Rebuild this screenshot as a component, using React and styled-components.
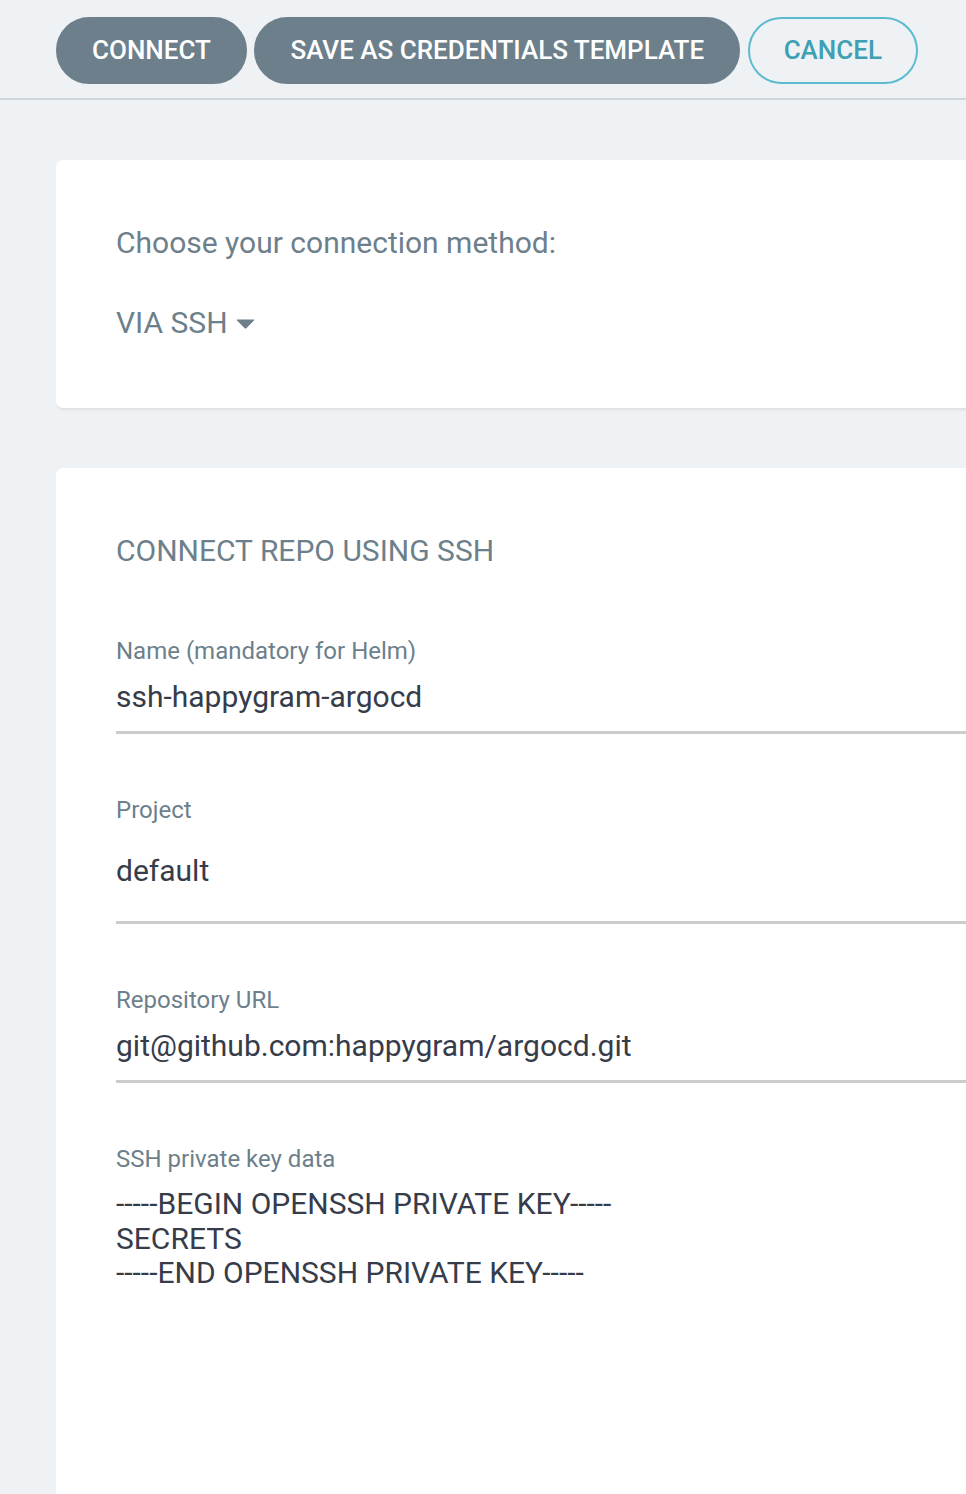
import React from 'react';
import styled, { createGlobalStyle } from 'styled-components';

const GlobalStyle = createGlobalStyle`
	html, body {
		margin: 0;
		padding: 0;
		background: #eef2f5;
		font-family: Roboto, "Liberation Sans", sans-serif;
		overflow: hidden;
	}
	* {
		box-sizing: border-box;
	}
`;

const fields = [
	{ label: 'Name (mandatory for Helm)', value: 'ssh-happygram-argocd' },
	{ label: 'Project', value: 'default', select: true },
	{ label: 'Repository URL', value: 'git@github.com:happygram/argocd.git' }
];

const keyData = '-----BEGIN OPENSSH PRIVATE KEY-----\nSECRETS\n-----END OPENSSH PRIVATE KEY-----';

export default function App() {
	return (
		<Page>
			<GlobalStyle />
			<Toolbar>
				<Button>Connect</Button>
				<Button>Save as credentials template</Button>
				<Button $outline>Cancel</Button>
			</Toolbar>
			<Content>
				<Card $top={65} $bottom={67}>
					<Heading $case="none">Choose your connection method:</Heading>
					<MethodToggle>
						VIA SSH
						<Caret width="19" height="10" viewBox="0 0 19 10">
							<path d="M1.5 0.5 H17.5 Q19 0.5 18 1.6 L10.5 9 Q9.5 10 8.5 9 L1 1.6 Q0 0.5 1.5 0.5 Z" fill="#6d7f8b" />
						</Caret>
					</MethodToggle>
				</Card>
				<Card $top={65} $bottom={400}>
					<Heading>Connect repo using SSH</Heading>
					<Fields>
						{fields.map((field) => (
							<Field key={field.label}>
								<Label>{field.label}</Label>
								<Input $select={field.select} value={field.value} readOnly />
							</Field>
						))}
						<Field>
							<Label>SSH private key data</Label>
							<KeyData>{keyData}</KeyData>
						</Field>
					</Fields>
				</Card>
			</Content>
		</Page>
	);
}

const Page = styled.div`
	width: 100%;
	height: 100vh;
	overflow: hidden;
	background: #eef2f5;
`;

const Toolbar = styled.div`
	display: flex;
	align-items: flex-start;
	gap: 7.5px;
	height: 100px;
	padding: 17px 0 0 56px;
	border-bottom: 2px solid #cfd6db;
`;

const Button = styled.button`
	height: 67px;
	padding: 0 34px 2px;
	border-radius: 34px;
	border: 2px solid ${props => props.$outline ? '#5dbbcf' : '#6d7f8b'};
	background: ${props => props.$outline ? 'transparent' : '#6d7f8b'};
	color: ${props => props.$outline ? '#3f9fb4' : '#ffffff'};
	font-family: Roboto, sans-serif;
	font-size: 26px;
	font-weight: 500;
	text-transform: uppercase;
	white-space: nowrap;
	cursor: pointer;
`;

const Content = styled.div`
	display: flex;
	flex-direction: column;
	gap: 60px;
	padding: 60px 0 0 56px;
`;

const Card = styled.div`
	width: calc(100% + 60px);
	background: #ffffff;
	border-radius: 7px;
	box-shadow: 1px 2px 3px rgba(0, 0, 0, 0.08);
	padding: ${props => props.$top}px 60px ${props => props.$bottom}px 60px;
`;

const Heading = styled.div`
	font-size: 30px;
	line-height: 36px;
	color: #6d7f8b;
	text-transform: ${props => props.$case === 'none' ? 'none' : 'uppercase'};
`;

const MethodToggle = styled.div`
	display: flex;
	align-items: center;
	margin-top: 44px;
	font-size: 30px;
	line-height: 36px;
	color: #6d7f8b;
	cursor: pointer;
`;

const Caret = styled.svg`
	margin-left: 8px;
	margin-top: 1px;
`;

const Fields = styled.div`
	display: flex;
	flex-direction: column;
	gap: 62px;
	margin-top: 68px;
`;

const Field = styled.div`
	display: flex;
	flex-direction: column;
`;

const Label = styled.label`
	font-size: 24px;
	line-height: 28px;
	color: #6d7f8b;
`;

const Input = styled.input`
	display: block;
	width: 100%;
	height: ${props => props.$select ? 72 : 56}px;
	margin-top: ${props => props.$select ? 28 : 13}px;
	padding: 0 0 ${props => props.$select ? 33 : 17}px;
	border: none;
	border-bottom: 3px solid #cccccc;
	background: transparent;
	font-family: Roboto, sans-serif;
	font-size: 30px;
	line-height: 36px;
	color: #363c4a;
	outline: none;
`;

const KeyData = styled.div`
	margin-top: 14px;
	font-size: 30px;
	line-height: 34.5px;
	color: #363c4a;
	white-space: pre;
`;
